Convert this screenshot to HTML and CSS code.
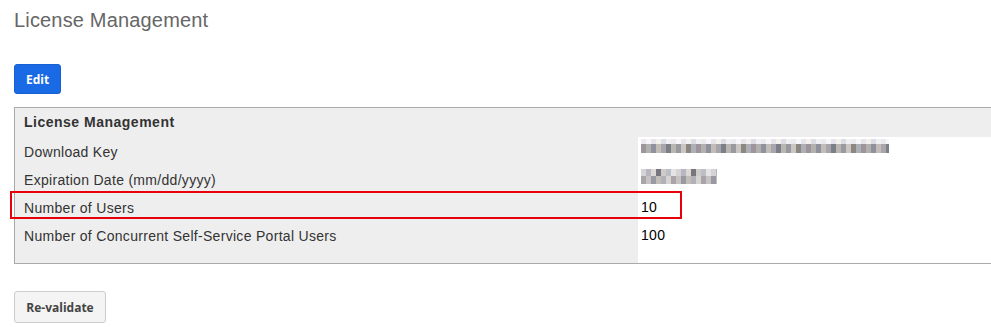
FILE: index.html
```html
<!DOCTYPE html>
<html>
<head>
<meta charset="utf-8">
<link rel="stylesheet" href="styles.css">
</head>
<body>
<div class="page">
  <h1 class="title">License Management</h1>
  <button class="btn btn-primary">Edit</button>
  <div class="panel">
    <div class="panel-head">License Management</div>
    <div class="grid">
      <div class="labels">
        <div class="row">Download Key</div>
        <div class="row">Expiration Date (mm/dd/yyyy)</div>
        <div class="row">Number of Users</div>
        <div class="row">Number of Concurrent Self-Service Portal Users</div>
      </div>
      <div class="values">
        <div class="vrow"><span class="mosaic mosaic-key"></span></div>
        <div class="vrow"><span class="mosaic mosaic-date"></span></div>
        <div class="vrow">10</div>
        <div class="vrow">100</div>
      </div>
    </div>
    <div class="highlight"></div>
  </div>
  <button class="btn btn-default">Re-validate</button>
</div>
</body>
</html>
```

FILE: styles.css
```css
html, body {
  margin: 0;
  padding: 0;
  background: #fff;
  overflow: hidden;
}
body {
  font-family: "Liberation Sans", Arial, sans-serif;
  width: 991px;
  height: 327px;
}
.page {
  padding: 8px 0 0 14px;
  display: flex;
  flex-direction: column;
  align-items: flex-start;
}
.title {
  margin: 0;
  font-size: 20px;
  font-weight: normal;
  color: #666;
  line-height: 24px;
  letter-spacing: 0.17px;
}
.btn {
  font-family: "Open Sans", "Liberation Sans", sans-serif;
  font-weight: bold;
  font-size: 12px;
  border-radius: 3px;
  cursor: pointer;
  padding: 0;
}
.btn-primary {
  margin-top: 32px;
  width: 47px;
  height: 30px;
  background: #1a6ae6;
  border: 1px solid #1560d2;
  color: #fff;
}
.panel {
  position: relative;
  margin-top: 13px;
  width: 1000px;
  border: 1px solid #aaa;
  border-right: none;
  background: #eee;
  color: #333;
  font-size: 14px;
  letter-spacing: 0.3px;
}
.panel-head {
  font-weight: bold;
  height: 29px;
  line-height: 29px;
  padding-left: 9px;
  letter-spacing: 0.5px;
}
.grid {
  display: grid;
  grid-template-columns: 623px 1fr;
}
.labels {
  padding-bottom: 14px;
}
.labels .row {
  height: 28px;
  line-height: 30px;
  padding-left: 9px;
}
.values {
  background: #fff;
  padding-bottom: 14px;
}
.vrow {
  height: 28px;
  line-height: 25px;
  padding-left: 3px;
  color: #000;
  display: flex;
  align-items: center;
}
.mosaic {
  display: block;
  background-repeat: no-repeat;
}
.mosaic-key {
  width: 248px;
  height: 15px;
  margin-top: -10px;
  background:
    repeating-linear-gradient(90deg, #9e959c 0 5px, #b3b1ae 5px 10px, #8f929d 10px 15px, #c2bdb6 15px 20px, #a8a6ac 20px 25px, #7d7f88 25px 30px, #bab7b3 30px 35px, #999a9f 35px 40px, #c9c6c4 40px 45px, #8c8880 45px 50px, #aeb0b8 50px 55px) 0 5px / 248px 9px no-repeat,
    repeating-linear-gradient(90deg, #ece9ee 0 5px, #f6f6f8 5px 10px, #e6e4ea 10px 15px, #f4f1ec 15px 20px, #dcdde4 20px 25px, #f0f0f2 25px 30px) 0 0 / 248px 5px no-repeat;
}
.mosaic-date {
  width: 76px;
  height: 15px;
  margin-top: -6px;
  background:
    repeating-linear-gradient(90deg, #a8a4a8 0 5px, #c6c3c2 5px 10px, #9899a2 10px 15px, #c3bdb8 15px 20px, #b0b2b8 20px 25px, #d6d3d0 25px 30px) 0 7px / 76px 8px no-repeat,
    repeating-linear-gradient(90deg, #d6d3d6 0 5px, #b8b6c0 5px 10px, #dcd8d3 10px 15px, #77767f 15px 20px, #cfcbc8 20px 25px, #bcbfc7 25px 30px, #e6e4e4 30px 35px) 0 0 / 76px 7px no-repeat;
}
.highlight {
  position: absolute;
  left: -5px;
  top: 83px;
  width: 668px;
  height: 24px;
  border: 2px solid #e8000b;
}
.btn-default {
  margin-top: 27px;
  width: 92px;
  height: 32px;
  background: #f4f4f4;
  border: 1px solid #ccc;
  color: #444;
}
```
